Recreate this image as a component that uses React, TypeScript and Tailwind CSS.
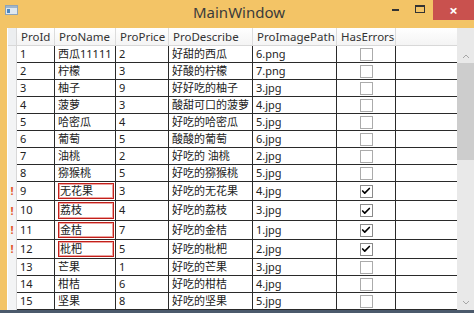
import { Check } from 'lucide-react';

type Row = {
  id: number;
  name: string;
  price: number;
  desc: string;
  image: string;
  hasErrors: boolean;
  h: string;
};

const rows: Row[] = [
  { id: 1, name: '西瓜11111', price: 2, desc: '好甜的西瓜', image: '6.png', hasErrors: false, h: 'h-[17px]' },
  { id: 2, name: '柠檬', price: 3, desc: '好酸的柠檬', image: '7.png', hasErrors: false, h: 'h-[17px]' },
  { id: 3, name: '柚子', price: 9, desc: '好好吃的柚子', image: '3.jpg', hasErrors: false, h: 'h-[17px]' },
  { id: 4, name: '菠萝', price: 3, desc: '酸甜可口的菠萝', image: '4.jpg', hasErrors: false, h: 'h-[17px]' },
  { id: 5, name: '哈密瓜', price: 4, desc: '好吃的哈密瓜', image: '5.jpg', hasErrors: false, h: 'h-[17px]' },
  { id: 6, name: '葡萄', price: 5, desc: '酸酸的葡萄', image: '6.jpg', hasErrors: false, h: 'h-[17px]' },
  { id: 7, name: '油桃', price: 2, desc: '好吃的 油桃', image: '2.jpg', hasErrors: false, h: 'h-[17px]' },
  { id: 8, name: '猕猴桃', price: 5, desc: '好吃的猕猴桃', image: '5.jpg', hasErrors: false, h: 'h-[17px]' },
  { id: 9, name: '无花果', price: 3, desc: '好吃的无花果', image: '4.jpg', hasErrors: true, h: 'h-[19px]' },
  { id: 10, name: '荔枝', price: 4, desc: '好吃的荔枝', image: '3.jpg', hasErrors: true, h: 'h-[20px]' },
  { id: 11, name: '金桔', price: 7, desc: '好吃的金桔', image: '1.jpg', hasErrors: true, h: 'h-[19px]' },
  { id: 12, name: '枇杷', price: 5, desc: '好吃的枇杷', image: '2.jpg', hasErrors: true, h: 'h-[19px]' },
  { id: 13, name: '芒果', price: 1, desc: '好吃的芒果', image: '3.jpg', hasErrors: false, h: 'h-[17px]' },
  { id: 14, name: '柑桔', price: 6, desc: '好吃的柑桔', image: '4.jpg', hasErrors: false, h: 'h-[17px]' },
  { id: 15, name: '坚果', price: 8, desc: '好吃的坚果', image: '5.jpg', hasErrors: false, h: 'h-[17px]' },
];

const headers = [
  { label: 'ProId', w: 'w-[38px]' },
  { label: 'ProName', w: 'w-[61px]' },
  { label: 'ProPrice', w: 'w-[53px]' },
  { label: 'ProDescribe', w: 'w-[84px]' },
  { label: 'ProImagePath', w: 'w-[84px]' },
  { label: 'HasErrors', w: 'w-[59px]' },
];

const cell = 'h-full flex items-center border-r border-[#2a2a2a] pl-[3px] whitespace-nowrap overflow-hidden';

function CheckBox({ checked }: { checked: boolean }) {
  return (
    <div
      className={`w-[13px] h-[13px] border bg-white flex items-center justify-center ${
        checked ? 'border-[#8a8a8a]' : 'border-[#ababab]'
      }`}
    >
      {checked && <Check className="w-[10px] h-[10px] text-black" strokeWidth={4} />}
    </div>
  );
}

export default function App() {
  return (
    <div
      className="w-[474px] h-[313px] overflow-hidden bg-[#f3c466] flex flex-col text-[#222]"
      style={{ fontFamily: '"Noto Sans", "Noto Sans CJK SC", sans-serif' }}
    >
      {/* title bar */}
      <div className="h-[28px] flex items-start shrink-0">
        <div className="w-[28px] h-[20px] flex items-center pl-[5px]">
          <svg width="13" height="10" viewBox="0 0 13 10">
            <rect x="0.5" y="0.5" width="12" height="9" fill="#dfe8ef" stroke="#8ea4b8" />
            <rect x="1" y="1" width="11" height="2" fill="#9fb6cc" />
            <rect x="2" y="4" width="3" height="4" fill="#4c86c0" />
          </svg>
        </div>
        <div className="flex-1 h-[24px] flex items-center justify-center text-[15px] text-[#3b3b3b] pl-[69px]">
          MainWindow
        </div>
        <div className="w-[26px] h-[20px] flex items-center justify-center pl-[2px]">
          <div className="w-[7px] h-[2px] bg-[#333]" />
        </div>
        <div className="w-[26px] h-[20px] flex items-center justify-center pb-[2px]">
          <div className="w-[10px] h-[8px] border border-[#333] border-t-2" />
        </div>
        <div className="w-[41px] h-[20px] bg-[#c9514e] flex items-center justify-center text-white text-[15px] font-bold">
          ×
        </div>
      </div>

      {/* client area */}
      <div className="flex-1 flex pl-[7px]">
        <div className="flex-1 flex bg-white pl-[1px]">
          <div className="flex flex-col">
            {/* header */}
            <div className="h-[18px] flex text-[11.5px] text-[#333] bg-gradient-to-b from-white to-[#f4f4f4] border-b border-[#d8d8d8]">
              <div className="w-[9px] h-full bg-[#eceef0] border-r border-[#d8d8d8]" />
              {headers.map((hd) => (
                <div
                  key={hd.label}
                  className={`${hd.w} h-full flex items-center pl-[4px] border-r border-[#dcdcdc] whitespace-nowrap`}
                >
                  {hd.label}
                </div>
              ))}
              <div className="w-[61px] h-full" />
            </div>

            {/* rows */}
            {rows.map((r) => (
              <div key={r.id} className={`${r.h} flex text-[11px]`}>
                <div className="w-[9px] h-full bg-[#f3f4f5] border-r border-[#d8d8d8] flex items-center justify-center text-[#e2572a] text-[11px] font-bold">
                  {r.hasErrors ? '!' : ''}
                </div>
                <div className="flex border-b border-[#2a2a2a] h-full">
                  <div className={`w-[38px] ${cell}`}>{r.id}</div>
                  <div className={`w-[61px] ${cell} ${r.hasErrors ? 'p-[1px]' : ''}`}>
                    {r.hasErrors ? (
                      <div className="w-full h-full border border-[#c2201b] shadow-[inset_0_0_0_1px_#eea3a0] flex items-center pl-[1px]">
                        {r.name}
                      </div>
                    ) : (
                      r.name
                    )}
                  </div>
                  <div className={`w-[53px] ${cell}`}>{r.price}</div>
                  <div className={`w-[84px] ${cell}`}>{r.desc}</div>
                  <div className={`w-[84px] ${cell}`}>{r.image}</div>
                  <div className="w-[59px] h-full flex items-center justify-center border-r border-[#2a2a2a]">
                    <CheckBox checked={r.hasErrors} />
                  </div>
                  <div className="w-[61px] h-full" />
                </div>
              </div>
            ))}
          </div>

          {/* vertical scrollbar */}
          <div className="w-[17px] h-[282px] bg-[#e9e9e9] flex flex-col items-center">
            <div className="h-[35px] w-full flex items-end justify-center pb-[4px]">
              <svg width="8" height="5" viewBox="0 0 8 5">
                <path d="M1 4 L4 1 L7 4" fill="none" stroke="#a6a6a6" strokeWidth="1" />
              </svg>
            </div>
            <div className="w-full h-[97px] bg-[#cdcdcd]" />
            <div className="flex-1" />
            <div className="h-[16px] w-full flex items-center justify-center">
              <svg width="8" height="5" viewBox="0 0 8 5">
                <path d="M1 1 L4 4 L7 1" fill="none" stroke="#a6a6a6" strokeWidth="1" />
              </svg>
            </div>
          </div>
        </div>
      </div>

      {/* bottom edge */}
      <div className="h-[3px] bg-[#4b5a6c] shrink-0" />
    </div>
  );
}
